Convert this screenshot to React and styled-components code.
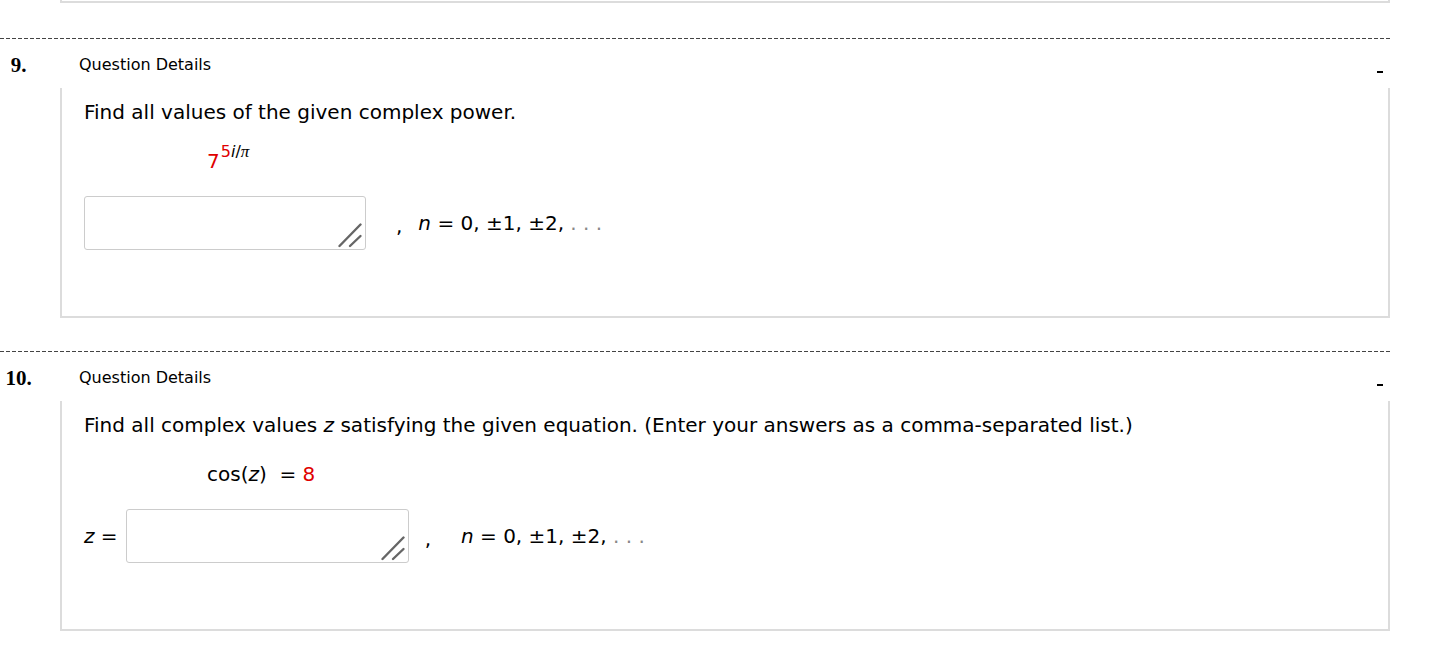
import React from 'react';
import styled, { createGlobalStyle } from 'styled-components';

const GlobalStyle = createGlobalStyle`
  body {
    margin: 0;
    background: #fff;
    color: #000;
    font-family: Verdana, "DejaVu Sans", sans-serif;
  }
`;

const Grip = () => (
  <GripSvg width="26" height="26" viewBox="0 0 26 26">
    <line x1="1.5" y1="23" x2="22.5" y2="1.5" />
    <line x1="12" y1="23" x2="22.5" y2="13" />
  </GripSvg>
);

const Answer = ({ label, width, commaGap, nGap }) => (
  <AnswerRow>
    {label && (
      <Label>
        <Var>{label}</Var> =
      </Label>
    )}
    <Field $width={width}>
      <Box />
      <Grip />
    </Field>
    <Comma $gap={commaGap}>,</Comma>
    <Range $gap={nGap}>
      <Var>n</Var> = 0, ±1, ±2, <Dots>. . .</Dots>
    </Range>
  </AnswerRow>
);

const QuestionBlock = ({ number, children }) => (
  <Question>
    <Divider />
    <Header>
      <Number>{number}.</Number>
      <Title>Question Details</Title>
      <Collapse />
    </Header>
    <Panel>{children}</Panel>
  </Question>
);

const App = () => {
  return (
    <>
      <GlobalStyle />
      <Page>
        <PrevPanel />
        <QuestionBlock number={9}>
          <Prompt>Find all values of the given complex power.</Prompt>
          <Formula>
            <Red>7</Red>
            <Sup>
              <Red>5</Red>
              <Var>i</Var>/<Pi>π</Pi>
            </Sup>
          </Formula>
          <Answer width={282} commaGap={30} nGap={16} />
        </QuestionBlock>
        <QuestionBlock number={10}>
          <Prompt>
            Find all complex values <Var>z</Var> satisfying the given equation. (Enter your
            answers as a comma-separated list.)
          </Prompt>
          <Formula>
            cos(<Var>z</Var>) &nbsp;= <Red>8</Red>
          </Formula>
          <Answer label="z" width={283} commaGap={16} nGap={30} />
        </QuestionBlock>
      </Page>
    </>
  );
};

export default App;

const Page = styled.div`
  width: 1390px;
`;

const PrevPanel = styled.div`
  margin-left: 60px;
  height: 1px;
  border: 2px solid #dcdcdc;
  border-top: none;
  margin-bottom: 35px;
`;

const Question = styled.section`
  margin-bottom: 33px;
`;

const Divider = styled.div`
  height: 1px;
  background: repeating-linear-gradient(to right, #444 0 4px, transparent 4px 6px);
`;

const Header = styled.div`
  display: flex;
  align-items: center;
  height: 49px;
  box-sizing: border-box;
  padding-top: 3px;
`;

const Number = styled.span`
  width: 37px;
  text-align: center;
  font-family: "Times New Roman", "Liberation Serif", serif;
  font-weight: bold;
  font-size: 21px;
`;

const Title = styled.span`
  margin-left: 42px;
  font-size: 16px;
  line-height: 20px;
`;

const Collapse = styled.span`
  margin-left: auto;
  margin-right: 7px;
  margin-top: 14px;
  width: 6px;
  height: 2px;
  background: #000;
`;

const Panel = styled.div`
  margin-left: 60px;
  border: 2px solid #dcdcdc;
  border-top: none;
  padding: 12px 0 66px 22px;
`;

const Prompt = styled.p`
  margin: 0;
  font-size: 20px;
  line-height: 24px;
`;

const Formula = styled.div`
  margin: 25px 0 0 123px;
  font-size: 20px;
  line-height: 24px;
`;

const Red = styled.span`
  color: #e00000;
`;

const Var = styled.i`
  font-style: italic;
`;

const Pi = styled.i`
  font-family: "Times New Roman", "Liberation Serif", serif;
  font-style: italic;
  font-size: 17px;
`;

const Sup = styled.span`
  font-size: 16px;
  line-height: 0;
  vertical-align: 11px;
  margin-left: 1px;
`;

const AnswerRow = styled.div`
  display: flex;
  align-items: center;
  margin-top: 23px;
  font-size: 20px;
`;

const Label = styled.span`
  margin-right: 8px;
`;

const Field = styled.div`
  position: relative;
  width: ${(p) => p.$width}px;
  height: 54px;
`;

const Box = styled.textarea`
  display: block;
  width: 100%;
  height: 100%;
  box-sizing: border-box;
  border: 1px solid #cccccc;
  border-radius: 3px;
  resize: none;
  background: #fff;
  outline: none;
`;

const GripSvg = styled.svg`
  position: absolute;
  right: 2px;
  bottom: 1px;
  stroke: #666;
  stroke-width: 2.4;
  stroke-linecap: round;
`;

const Comma = styled.span`
  margin-left: ${(p) => p.$gap}px;
  margin-top: 6px;
`;

const Range = styled.span`
  margin-left: ${(p) => p.$gap}px;
`;

const Dots = styled.span`
  color: #888;
`;
